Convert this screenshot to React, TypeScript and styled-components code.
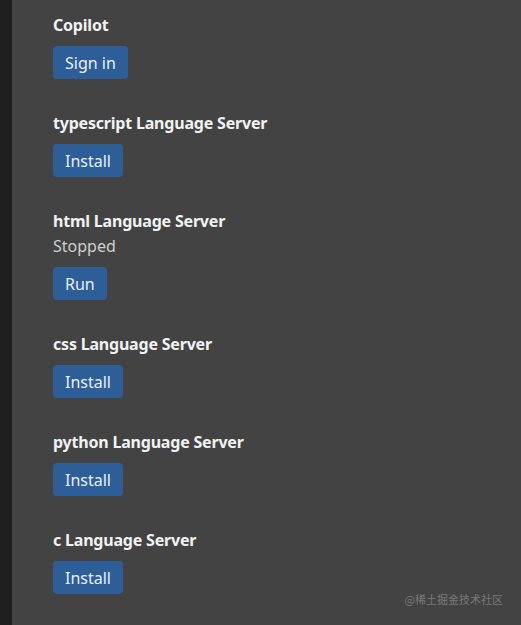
import styled, { createGlobalStyle } from 'styled-components';

const GlobalStyle = createGlobalStyle`
  html, body {
    margin: 0;
    padding: 0;
    background: #434343;
  }
  * {
    box-sizing: border-box;
  }
`;

type Server = {
  name: string;
  status?: string;
  action: string;
};

const SERVERS: Server[] = [
  { name: 'Copilot', action: 'Sign in' },
  { name: 'typescript Language Server', action: 'Install' },
  { name: 'html Language Server', status: 'Stopped', action: 'Run' },
  { name: 'css Language Server', action: 'Install' },
  { name: 'python Language Server', action: 'Install' },
  { name: 'c Language Server', action: 'Install' },
];

const App = () => {
  return (
    <>
      <GlobalStyle />
      <Layout>
        <SideStrip />
        <Content>
          {SERVERS.map((server) => (
            <Section key={server.name}>
              <Title>{server.name}</Title>
              {server.status && <Status>{server.status}</Status>}
              <ActionButton>{server.action}</ActionButton>
            </Section>
          ))}
        </Content>
        <Watermark>@稀土掘金技术社区</Watermark>
      </Layout>
    </>
  );
};

export default App;

const Layout = styled.div`
  position: relative;
  display: flex;
  height: 625px;
  background: #434343;
  font-family: 'Noto Sans', 'Open Sans', sans-serif;
  overflow: hidden;
`;

const SideStrip = styled.div`
  width: 12px;
  flex-shrink: 0;
  background: #1f1f1f;
`;

const Content = styled.div`
  display: flex;
  flex-direction: column;
  gap: 33px;
  padding: 14px 0 0 41px;
`;

const Section = styled.div`
  display: flex;
  flex-direction: column;
  align-items: flex-start;
`;

const Title = styled.div`
  font-size: 16px;
  line-height: 22px;
  font-weight: 700;
  color: #f2f2f2;
  letter-spacing: -0.2px;
`;

const Status = styled.div`
  margin-top: 3px;
  font-size: 16px;
  line-height: 22px;
  color: #cfcfcf;
`;

const ActionButton = styled.button`
  margin-top: 10px;
  height: 33px;
  padding: 0 12px;
  border: none;
  border-radius: 4px;
  background: #2d5e98;
  color: #e9f0f8;
  font-family: inherit;
  font-size: 16px;
  cursor: pointer;
`;

const Watermark = styled.div`
  position: absolute;
  right: 18px;
  bottom: 18px;
  font-family: 'Noto Sans CJK SC', sans-serif;
  font-size: 11px;
  color: #7a7a7a;
`;
